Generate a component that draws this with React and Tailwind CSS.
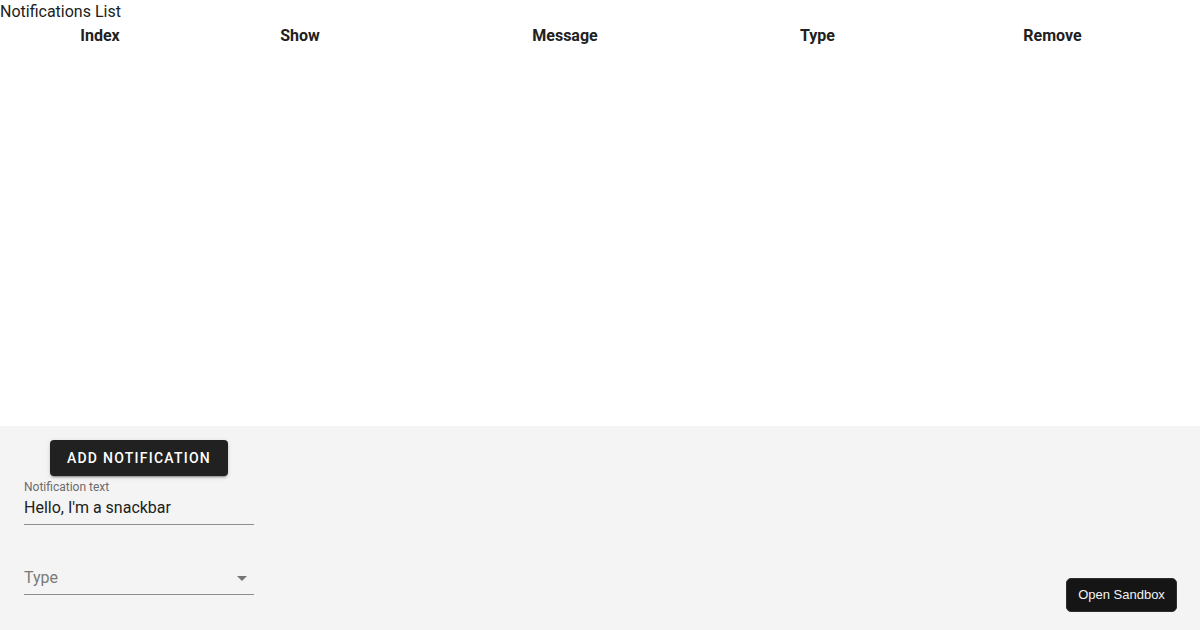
import React from "react";

export default function App() {
  return (
    <div className="relative w-[1200px] h-[630px] flex flex-col font-['Roboto',sans-serif] text-[#212121]">
      <div className="h-[426px] bg-white">
        <div className="text-base leading-6">Notifications List</div>
        <div className="flex">
          <div className="w-[200px] text-center font-bold text-base leading-6">Index</div>
          <div className="w-[200px] text-center font-bold text-base leading-6">Show</div>
          <div className="w-[330px] text-center font-bold text-base leading-6">Message</div>
          <div className="w-[175px] text-center font-bold text-base leading-6">Type</div>
          <div className="w-[295px] text-center font-bold text-base leading-6">Remove</div>
        </div>
      </div>
      <div className="flex-1 bg-[#f4f4f4] flex flex-col">
        <div className="pl-[50px] pt-[14px]">
          <button className="h-9 w-[178px] rounded bg-[#212121] text-white text-sm font-medium uppercase tracking-[1.25px] shadow-[0_3px_1px_-2px_rgba(0,0,0,0.2),0_2px_2px_0_rgba(0,0,0,0.14),0_1px_5px_0_rgba(0,0,0,0.12)]">
            Add Notification
          </button>
        </div>
        <div className="ml-6 w-[230px] flex flex-col">
          <div className="mt-[5px] text-xs leading-3 text-[#6b6b6b]">Notification text</div>
          <div className="mt-[1px] pt-1 pb-[7px] border-b border-[#8d8d8d] text-base leading-[19px] text-[#212121]">
            Hello, I'm a snackbar
          </div>
          <div className="mt-[39px] pt-1 pb-[7px] border-b border-[#8d8d8d] flex items-center justify-between">
            <span className="text-base leading-[19px] text-[#7a7a7a]">Type</span>
            <svg viewBox="0 0 24 24" className="w-6 h-6 -my-1 fill-[#757575]">
              <path d="M7 10l5 5 5-5z" />
            </svg>
          </div>
        </div>
      </div>
      <button className="absolute right-[23px] bottom-[18px] w-[111px] h-[34px] rounded-[5px] bg-[#151515] border border-[#2e2e2e] text-[#f2f2f2] text-[13px] font-['Liberation_Sans',sans-serif]">
        Open Sandbox
      </button>
    </div>
  );
}
